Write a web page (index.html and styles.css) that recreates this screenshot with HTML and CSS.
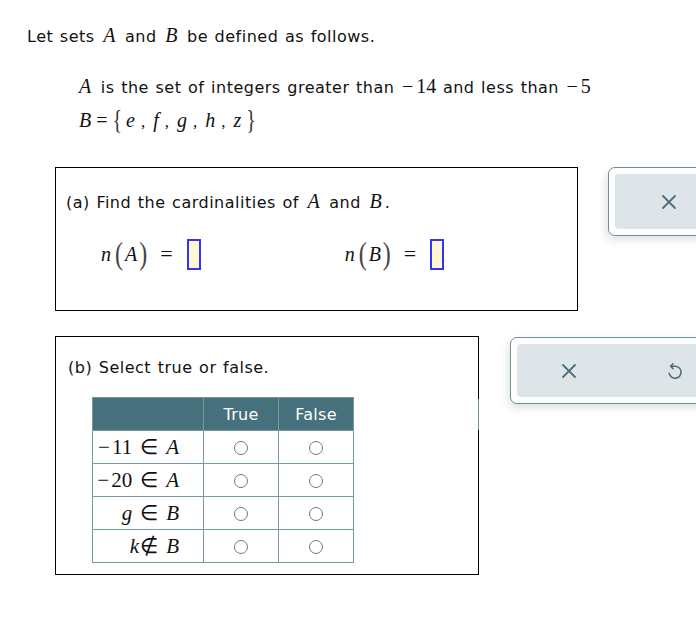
FILE: index.html
```html
<!DOCTYPE html>
<html>
<head>
<meta charset="utf-8">
<link rel="stylesheet" href="styles.css">
</head>
<body>
<div class="page">
  <p class="intro">Let sets <span class="mi">A</span> and <span class="mi">B</span> be defined as follows.</p>
  <div class="defs">
    <p class="def-line"><span class="mi">A</span> is the set of integers greater than <span class="mn"><span class="neg">−</span>14</span> and less than <span class="mn"><span class="neg">−</span>5</span></p>
    <p class="def-line"><span class="mi">B</span><span class="mo set-eq">=</span><span class="brace">{</span><span class="mi">e</span><span class="comma">,</span><span class="mi">f</span><span class="comma">,</span><span class="mi">g</span><span class="comma">,</span><span class="mi">h</span><span class="comma">,</span><span class="mi">z</span><span class="brace">}</span></p>
  </div>

  <div class="part-row row-a">
    <section class="part part-a">
      <p class="part-title">(a) Find the cardinalities of <span class="mi">A</span> and <span class="mi">B</span>.</p>
      <div class="eqs">
        <div class="eq">
          <span class="mi fn">n</span><span class="paren">(</span><span class="mi arg">A</span><span class="paren">)</span><span class="mo equal">=</span><span class="answer"></span>
        </div>
        <div class="eq">
          <span class="mi fn">n</span><span class="paren">(</span><span class="mi arg">B</span><span class="paren">)</span><span class="mo equal">=</span><span class="answer"></span>
        </div>
      </div>
    </section>
    <div class="tools">
      <div class="tool-inner">
        <button class="tool-btn" aria-label="clear">
          <svg width="16" height="16" viewBox="0 0 16 16"><path d="M2 2 L14 14 M14 2 L2 14" stroke="#4b6f7b" stroke-width="1.8" fill="none" stroke-linecap="round"/></svg>
        </button>
      </div>
    </div>
  </div>

  <div class="part-row row-b">
    <section class="part part-b">
      <p class="part-title">(b) Select true or false.</p>
      <table class="tf">
        <thead>
          <tr><th class="c1"></th><th>True</th><th>False</th></tr>
        </thead>
        <tbody>
          <tr><td class="c1"><span class="mn"><span class="neg">−</span>11</span><span class="mo rel">∈</span><span class="mi">A</span></td><td><span class="radio"></span></td><td><span class="radio"></span></td></tr>
          <tr><td class="c1"><span class="mn"><span class="neg">−</span>20</span><span class="mo rel">∈</span><span class="mi">A</span></td><td><span class="radio"></span></td><td><span class="radio"></span></td></tr>
          <tr><td class="c1"><span class="mi">g</span><span class="mo rel">∈</span><span class="mi">B</span></td><td><span class="radio"></span></td><td><span class="radio"></span></td></tr>
          <tr><td class="c1"><span class="mi">k</span><span class="mo rel nrel">∉</span><span class="mi">B</span></td><td><span class="radio"></span></td><td><span class="radio"></span></td></tr>
        </tbody>
      </table>
    </section>
    <div class="tools tools-b">
      <div class="tool-inner">
        <button class="tool-btn" aria-label="clear">
          <svg width="16" height="16" viewBox="0 0 16 16"><path d="M2 2 L14 14 M14 2 L2 14" stroke="#4b6f7b" stroke-width="1.8" fill="none" stroke-linecap="round"/></svg>
        </button>
        <button class="tool-btn" aria-label="undo">
          <svg width="18" height="20" viewBox="0 0 18 20"><path d="M4.6 5.2 H9 A6 6 0 1 1 3.2 12.4" stroke="#4b6f7b" stroke-width="1.6" fill="none" stroke-linecap="round" stroke-linejoin="round"/><path d="M7 2.8 L4.6 5.2 L7 7.6" stroke="#4b6f7b" stroke-width="1.6" fill="none" stroke-linecap="round" stroke-linejoin="round"/></svg>
        </button>
      </div>
    </div>
  </div>
</div>
</body>
</html>
```
FILE: styles.css
```css
html, body {
  margin: 0;
  padding: 0;
  overflow: hidden;
  background: #fff;
}
body {
  font-family: "DejaVu Sans", Verdana, sans-serif;
  font-size: 16px;
  color: #111;
}
p { margin: 0; }
.page {
  padding: 25px 0 0 27px;
  letter-spacing: 0.5px;
  word-spacing: 1px;
}
.intro {
  line-height: 20px;
}
.mi, .mn, .mo, .brace, .comma, .paren {
  font-family: "Liberation Serif", "Times New Roman", serif;
  letter-spacing: 0;
  word-spacing: 0;
}
.mi {
  font-style: italic;
  font-size: 20px;
  margin: 0 3px 0 2px;
}
.mn, .mo {
  font-size: 20px;
}
.neg {
  margin: 0 3px 0 1px;
}
.defs {
  margin: 29px 0 0 52px;
}
.def-line {
  line-height: 20px;
  white-space: nowrap;
}
.def-line + .def-line {
  margin-top: 12px;
}
.def-line .mi:first-child { margin-left: 0; }
.set-eq { margin: 0 3px 0 2px; }
.brace {
  font-size: 20px;
  display: inline-block;
  transform: scaleY(1.35);
  color: #333;
  margin: 0 2px;
}
.comma {
  font-size: 17px;
  margin: 0 6px 0 3px;
}
.part-row {
  display: flex;
  align-items: flex-start;
  margin-left: 28px;
}
.row-a { margin-top: 35px; gap: 30px; }
.row-b { margin-top: 25px; gap: 31px; }
.part {
  border: 1px solid #000;
  box-sizing: border-box;
  flex: none;
  position: relative;
}
.part-a { width: 523px; height: 144px; padding: 23px 0 0 10px; }
.part-b { width: 424px; height: 239px; padding: 21px 0 0 12px; }
.part-b::after {
  content: "";
  position: absolute;
  right: -1px;
  top: 62px;
  width: 1px;
  height: 31px;
  background: #6e8e98;
}
.part-title { line-height: 20px; white-space: nowrap; }
.eqs {
  display: flex;
  margin: 25px 0 0 35px;
}
.eq {
  display: flex;
  align-items: center;
  height: 32px;
}
.eq + .eq { margin-left: 144px; }
.eq .fn { margin: 0 4px 0 0; }
.eq .arg { margin: 0 2px 0 2px; }
.paren {
  font-size: 24px;
  color: #444;
  display: inline-block;
  transform: scaleY(1.3);
}
.answer {
  display: inline-block;
  width: 10px;
  height: 27px;
  border: 2px solid #3333ff;
  background: #fff8d2;
}
.eq .mo.equal { margin: 0 14px 0 13px; font-size: 22px; }

.tools {
  flex: none;
  width: 180px;
  height: 69px;
  box-sizing: border-box;
  border: 1px solid #6e8e98;
  border-radius: 7px;
  padding: 6px;
  background: #fff;
  box-shadow: -2px 4px 8px rgba(0, 0, 0, 0.12);
}
.tools-b { width: 260px; height: 67px; margin-top: 1px; }
.tool-inner {
  display: flex;
  height: 100%;
  background: #dee5e8;
  border-radius: 4px;
}
.tool-btn {
  width: 107px;
  height: 100%;
  border: 0;
  background: transparent;
  padding: 0;
  display: flex;
  align-items: center;
  justify-content: center;
}
.tools-b .tool-btn { width: 104px; }
.tools-b .tool-btn + .tool-btn { padding-left: 4px; }
.tf {
  border-collapse: collapse;
  margin: 19px 0 0 24px;
  letter-spacing: 0;
  word-spacing: 0;
}
.tf th, .tf td {
  border: 1px solid #7898a2;
  padding: 0;
}
.tf thead th {
  background: #47707d;
  color: #fff;
  font-weight: normal;
  height: 32px;
  font-size: 16px;
  letter-spacing: 0.3px;
}
.tf th { width: 74px; }
.tf th.c1 { width: 110px; }
.tf td {
  height: 32px;
  text-align: center;
}
.tf td.c1 {
  text-align: right;
  padding-right: 24px;
  white-space: nowrap;
}
.tf .mi, .tf .mn, .tf .mo { font-size: 21px; margin: 0; }
.tf .neg { margin: 0 2px 0 0; }
.tf .mo.rel { margin: 0 8px 0 8px; }
.tf .mo.nrel { margin: 0 8px 0 1px; }
.radio {
  display: inline-block;
  width: 12px;
  height: 12px;
  border: 1px solid #777;
  border-radius: 50%;
  vertical-align: middle;
}
```
